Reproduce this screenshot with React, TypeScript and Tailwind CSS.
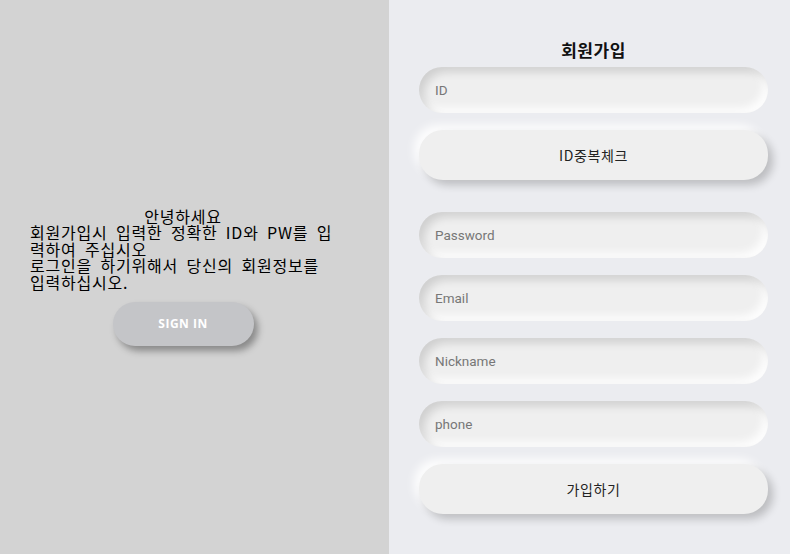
import React from "react";

const fields = ["Password", "Email", "Nickname", "phone"];

const inputCls =
  "w-full h-[46px] rounded-full bg-[#efefef] px-4 text-[13.5px] text-[#333] placeholder:text-[#777] outline-none shadow-[inset_5px_5px_8px_rgba(0,0,0,0.13),inset_-5px_-5px_8px_rgba(255,255,255,0.9)] [font-family:Roboto,'Noto_Sans_CJK_KR',sans-serif]";

const buttonCls =
  "w-full h-[50px] rounded-[24px] bg-[#efefef] text-[14px] tracking-[0.6px] text-[#222] shadow-[5px_5px_8px_rgba(0,0,0,0.2),-5px_-5px_10px_rgba(255,255,255,0.9)] [font-family:'Noto_Sans_CJK_KR',sans-serif]";

const App = () => {
  return (
    <div className="flex w-full h-[554px] overflow-hidden">
      {/* Left panel */}
      <div className="w-[389px] shrink-0 bg-[#d3d3d3] flex items-center pl-[30px]">
        <div className="w-[306px] flex flex-col items-center">
          <div className="w-full text-[16px] leading-[16.5px] tracking-[0.8px] [word-spacing:4px] text-black [font-family:'Noto_Sans_CJK_KR',sans-serif]">
            <p className="text-center">안녕하세요</p>
            <p>회원가입시 입력한 정확한 ID와 PW를 입력하여 주십시오</p>
            <p>로그인을 하기위해서 당신의 회원정보를 입력하십시오.</p>
          </div>
          <button className="mt-[12px] w-[141px] h-[44px] rounded-full bg-[#c4c5c8] text-white text-[12px] font-bold tracking-[0.5px] shadow-[4px_5px_7px_rgba(0,0,0,0.35)] [font-family:'Open_Sans',sans-serif]">
            SIGN IN
          </button>
        </div>
      </div>

      {/* Right panel */}
      <div className="flex-1 bg-[#ebecf0] pl-[30px] pr-[22px] pt-[40px]">
        <h2 className="text-center text-[17px] font-bold leading-[20px] tracking-[0.5px] text-[#111] [font-family:'Noto_Sans_CJK_KR',sans-serif]">
          회원가입
        </h2>
        <div className="mt-[7px] flex flex-col">
          <input className={inputCls} placeholder="ID" />
          <button className={`${buttonCls} mt-[17px]`}>ID중복체크</button>
          <div className="mt-[32px] flex flex-col gap-[17px]">
            {fields.map((f) => (
              <input key={f} className={inputCls} placeholder={f} />
            ))}
            <button className={buttonCls}>가입하기</button>
          </div>
        </div>
      </div>
    </div>
  );
};

export default App;
